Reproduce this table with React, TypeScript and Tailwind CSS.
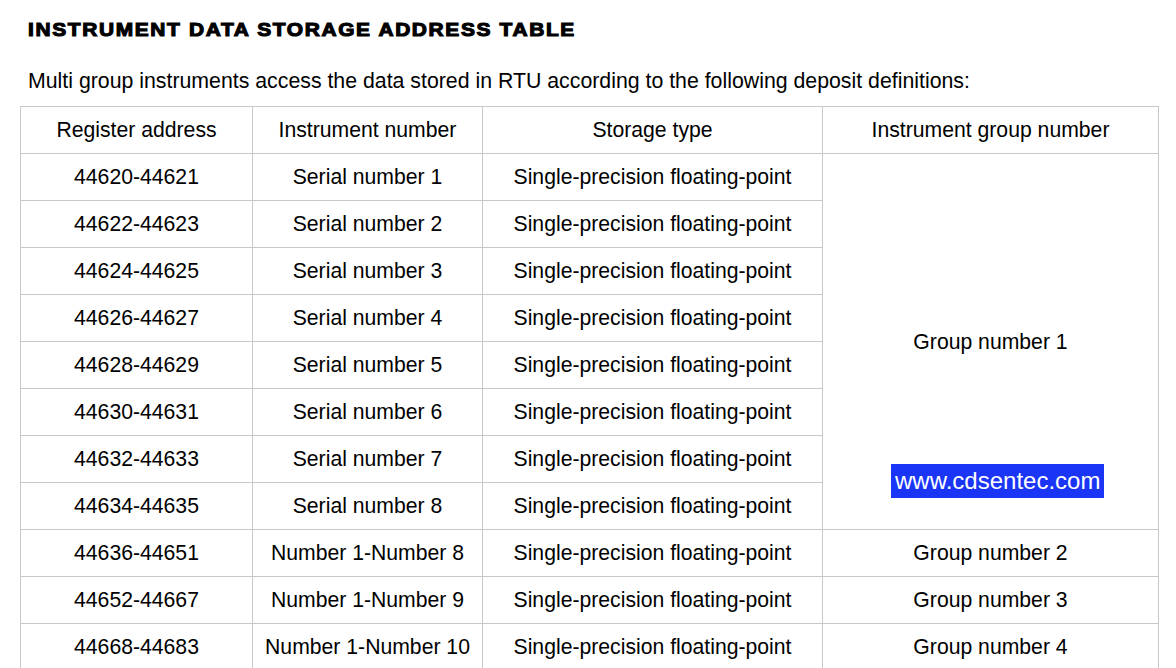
import React from "react";

const rows = [
  ["44620-44621", "Serial number 1"],
  ["44622-44623", "Serial number 2"],
  ["44624-44625", "Serial number 3"],
  ["44626-44627", "Serial number 4"],
  ["44628-44629", "Serial number 5"],
  ["44630-44631", "Serial number 6"],
  ["44632-44633", "Serial number 7"],
  ["44634-44635", "Serial number 8"],
];

const tail = [
  ["44636-44651", "Number 1-Number 8", "Group number 2"],
  ["44652-44667", "Number 1-Number 9", "Group number 3"],
  ["44668-44683", "Number 1-Number 10", "Group number 4"],
];

const td = "border border-[#c8c8c8] h-[47px] p-0 text-center align-middle";
const SP = "Single-precision floating-point";

export default function App() {
  return (
    <div className="w-[1176px] h-[668px] overflow-hidden bg-white text-black font-['Liberation_Sans',Arial,sans-serif]">
      <div className="pt-[18px] pl-[28px]">
        <h1 className="inline-block origin-left scale-x-[1.1] text-[19px] leading-[24px] font-bold tracking-[1.5px] [-webkit-text-stroke:1.1px_black]">
          INSTRUMENT DATA STORAGE ADDRESS TABLE
        </h1>
        <p className="mt-[26px] text-[21.3px] leading-[24px]">
          Multi group instruments access the data stored in RTU according to the following deposit definitions:
        </p>
      </div>
      <table className="ml-[20px] mt-[13px] border-collapse table-fixed text-[21.2px] leading-[24px]">
        <colgroup>
          <col className="w-[232px]" />
          <col className="w-[230px]" />
          <col className="w-[340px]" />
          <col className="w-[336px]" />
        </colgroup>
        <tbody>
          <tr>
            <td className={td}>Register address</td>
            <td className={td}>Instrument number</td>
            <td className={td}>Storage type</td>
            <td className={td}>Instrument group number</td>
          </tr>
          {rows.map((r, i) => (
            <tr key={r[0]}>
              <td className={td}>{r[0]}</td>
              <td className={td}>{r[1]}</td>
              <td className={td}>{SP}</td>
              {i === 0 && (
                <td rowSpan={8} className={td + " relative"}>
                  Group number 1
                  <span className="absolute left-[68px] top-[310px] h-[34px] px-[4px] bg-[#1a35f5] text-white text-[24px] leading-[34px]">
                    www.cdsentec.com
                  </span>
                </td>
              )}
            </tr>
          ))}
          {tail.map((r) => (
            <tr key={r[0]}>
              <td className={td}>{r[0]}</td>
              <td className={td}>{r[1]}</td>
              <td className={td}>{SP}</td>
              <td className={td}>{r[2]}</td>
            </tr>
          ))}
        </tbody>
      </table>
    </div>
  );
}
